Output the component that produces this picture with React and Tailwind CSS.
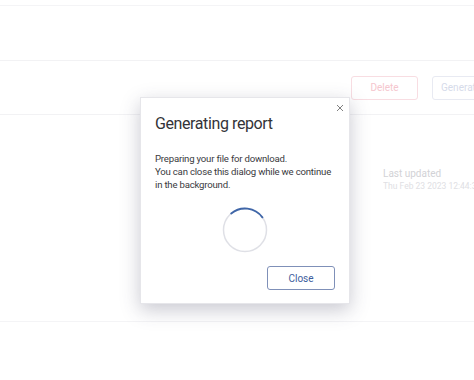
import React from "react";

export default function App() {
  return (
    <div className="relative w-[474px] h-[380px] overflow-hidden bg-white" style={{ fontFamily: "Roboto, 'Noto Sans', sans-serif" }}>
      {/* faded page behind */}
      <div className="flex flex-col">
        <div className="h-[6px] border-b border-[#f4f4f6]" />
        <div className="h-[55px] border-b border-[#f2f2f4]" />
        <div className="h-[54px] border-b border-[#f2f2f4] flex items-center justify-end gap-[14px] -mr-[40px]">
          <div className="w-[67px] h-[24px] border border-[#f8dde2] rounded-[3px] flex items-center justify-center text-[10px] text-[#f5c6ce]">Delete</div>
          <div className="w-[82px] h-[24px] border border-[#e8eaf2] rounded-[3px] flex items-center pl-[8px] text-[10px] text-[#d6dbea]">Generate</div>
        </div>
        <div className="h-[207px] border-b border-[#f4f4f6] flex justify-end">
          <div className="mt-[52px] w-[91px] flex flex-col overflow-hidden whitespace-nowrap">
            <div className="text-[10px] leading-[13px] text-[#d2d2d6]">Last updated</div>
            <div className="text-[8.5px] leading-[13px] text-[#e0e0e4]">Thu Feb 23 2023 12:44:39</div>
          </div>
        </div>
      </div>

      {/* dialog */}
      <div className="absolute left-[140px] top-[97px] w-[210px] h-[207px] bg-white border border-[#e6e6ea] shadow-[0_6px_18px_rgba(60,60,90,0.28)] flex flex-col">
        <button className="absolute right-[4px] top-[5px] w-[10px] h-[10px] flex items-center justify-center">
          <svg width="8" height="8" viewBox="0 0 8 8" fill="none" stroke="#808080" strokeWidth="1">
            <path d="M1 1L7 7M7 1L1 7" />
          </svg>
        </button>
        <div className="pl-[14px] pt-[15px] text-[16px] leading-[22px] tracking-[-0.4px] text-[#333338] whitespace-nowrap">Generating report</div>
        <div className="pl-[14px] pt-[17px] text-[9.6px] leading-[13px] tracking-[-0.2px] text-[#3a3a40] whitespace-nowrap">
          <div>Preparing your file for download.</div>
          <div>You can close this dialog while we continue</div>
          <div>in the background.</div>
        </div>
        <div className="flex justify-center pt-[16px]">
          <svg width="46" height="46" viewBox="0 0 46 46">
            <circle cx="23" cy="23" r="21.5" fill="none" stroke="#dfe0e6" strokeWidth="1.5" />
            <path d="M 9.2 6.5 A 21.5 21.5 0 0 1 40.4 10.4" fill="none" stroke="#3f66a8" strokeWidth="1.8" strokeLinecap="round" />
          </svg>
        </div>
        <div className="flex justify-end pr-[14px] pt-[13px]">
          <button className="w-[68px] h-[24px] border border-[#7f90b8] rounded-[3px] text-[10px] text-[#3d5d9c] flex items-center justify-center">Close</button>
        </div>
      </div>
    </div>
  );
}
